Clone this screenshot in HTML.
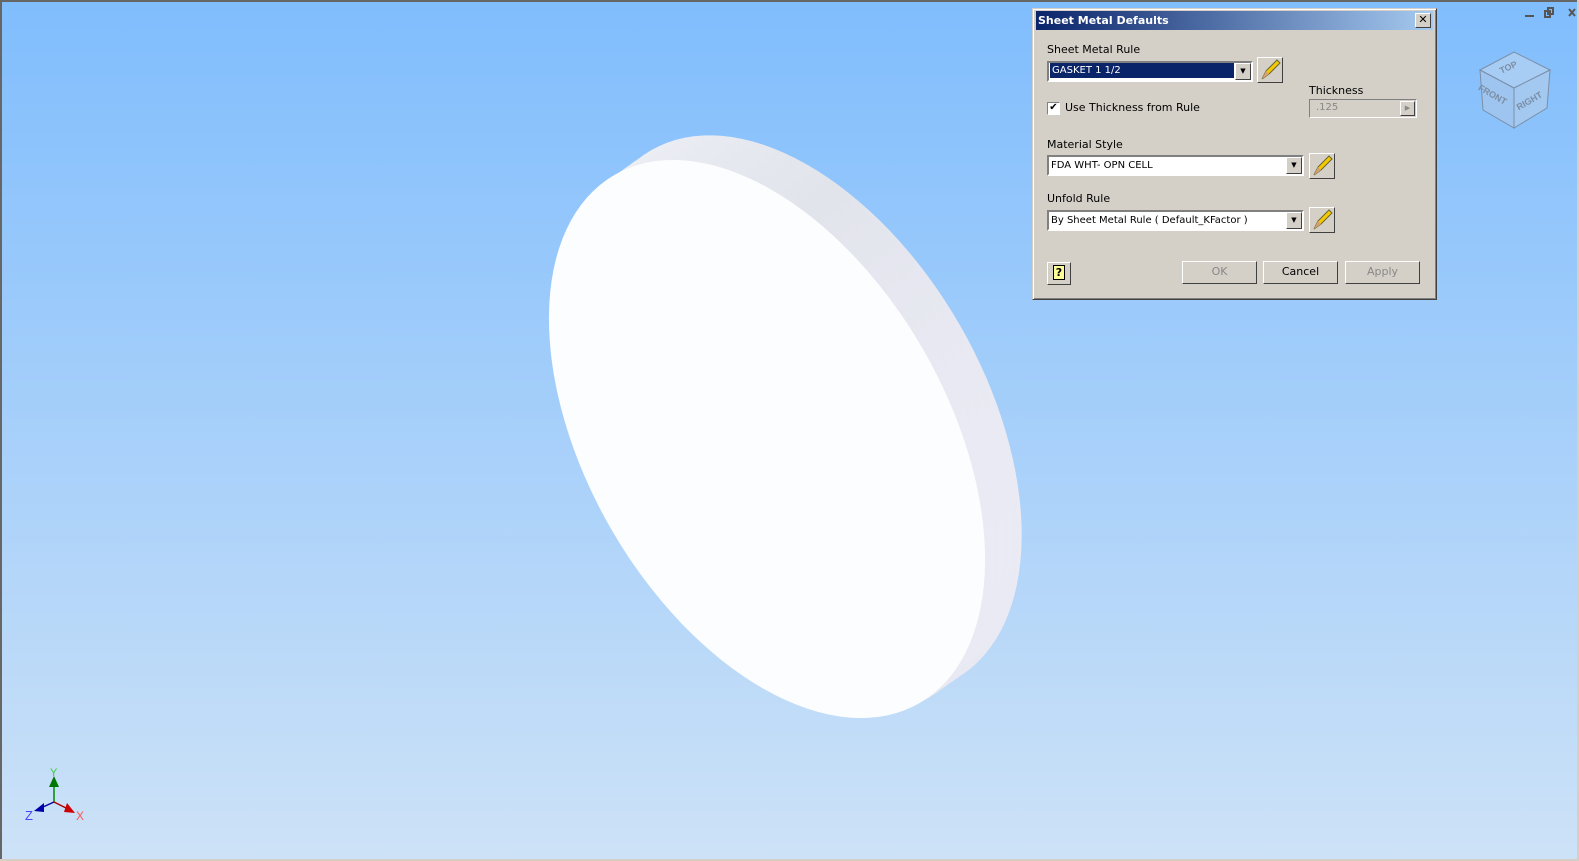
<!DOCTYPE html>
<html><head><style>
*{margin:0;padding:0;box-sizing:border-box}
body{width:1579px;height:861px;overflow:hidden;background:#d4d0c8;font-family:"DejaVu Sans","Liberation Sans",sans-serif;font-size:11px;position:relative}
#vp{position:absolute;left:0;top:0;width:1577px;height:859px;background:linear-gradient(#80bdfd,#cde2f7);border-left:2px solid #666;border-top:2px solid #666}
.dlg{position:absolute;left:1032px;top:8px;width:405px;height:292px;background:#d4d0c8;border:1px solid;border-color:#d4d0c8 #404040 #404040 #d4d0c8;box-shadow:inset 1px 1px #fff,inset -1px -1px #808080}
.tb{position:absolute;left:3px;top:2px;right:3px;height:19px;background:linear-gradient(90deg,#0a246a,#a6caf0);color:#fff;font-weight:bold;font-size:11px;line-height:19px;padding-left:2px}
.x{position:absolute;right:2px;top:2px;width:16px;height:15px;background:#d4d0c8;border:1px solid;border-color:#fff #404040 #404040 #fff;color:#000;font-size:11px;line-height:12px;text-align:center}
.l{position:absolute;font-size:11px;color:#000;line-height:13px}
.cb{position:absolute;height:21px;background:#fff;border:2px solid;border-color:#808080 #fff #fff #808080;line-height:16px;padding-left:2px;font-size:11px}
.dd{position:absolute;right:0;top:0;width:16px;height:17px;background:#d4d0c8;border:1px solid;border-color:#fff #404040 #404040 #fff;font-size:7px;text-align:center;line-height:15px}
.pb{position:absolute;width:26px;height:26px;border:1px solid;border-color:#fff #404040 #404040 #fff;background:#d4d0c8}
.btn{position:absolute;top:252px;width:75px;height:23px;border:1px solid;border-color:#fff #404040 #404040 #fff;text-align:center;line-height:20px;font-size:11px}
</style></head><body>
<div id="vp"></div>
<svg style="position:absolute;left:0;top:0" width="1579" height="861">
<defs><linearGradient id="sg" x1="0" y1="0" x2="1" y2="1"><stop offset="0" stop-color="#f4f6fb"/><stop offset="0.55" stop-color="#e2e4ec"/><stop offset="1" stop-color="#eeeef8"/></linearGradient></defs>
<g transform="translate(767,439) rotate(-30)">
<ellipse rx="180" ry="305" fill="url(#sg)" transform="translate(44,-3)"/>
<ellipse rx="180" ry="305" fill="url(#sg)" transform="translate(33,-2)"/>
<ellipse rx="180" ry="305" fill="url(#sg)" transform="translate(22,-1)"/>
<ellipse rx="180" ry="305" fill="url(#sg)" transform="translate(11,0)"/>
<ellipse rx="180" ry="305" fill="#fcfdff"/>
</g>
<g font-family="Liberation Sans" font-size="11">
<line x1="54" y1="802" x2="54" y2="783" stroke="#080" stroke-width="1.5"/>
<polygon points="49,787 54,776 59,787" fill="#070"/>
<text x="50" y="776" fill="#3c3">Y</text>
<polyline points="54,802 43,807" stroke="#00a" fill="none" stroke-width="1.5"/>
<polygon points="34,811 44,803 44,812" fill="#00a"/>
<text x="25" y="820" fill="#44f" font-size="13">Z</text>
<polyline points="54,802 66,808" stroke="#a00" fill="none" stroke-width="1.5"/>
<polygon points="75,813 64,812 67,803" fill="#c00"/>
<text x="76" y="820" fill="#f55" font-size="12">X</text>
</g>
<g fill="#a8cdf4" stroke="#7a8ea8" stroke-width="1">
<polygon points="1480,70 1514,52 1550,70 1514,88"/>
<polygon points="1480,70 1514,88 1514,128 1483,110" fill="#9ec5ef"/>
<polygon points="1514,88 1550,70 1547,108 1514,128" fill="#a3c9f1"/>
</g>
<g font-family="Liberation Sans" font-size="9" fill="#7b8ea6" font-weight="bold">
<text x="1500" y="72" transform="rotate(-25 1505 70)">TOP</text>
<text x="1474" y="95" transform="rotate(30 1486 99)">FRONT</text>
<text x="1514" y="107" transform="rotate(-30 1523 100)">RIGHT</text>
</g>
<g stroke="#555" fill="none" stroke-width="2">
<line x1="1525" y1="16" x2="1534" y2="16"/>
<rect x="1545" y="11" width="5" height="6"/><rect x="1548" y="8" width="5" height="6"/>
<path d="M1569 9 L1575 16 M1575 9 L1569 16"/>
</g>
</svg>
<div class="dlg">
<div class="tb">Sheet Metal Defaults<div class="x">✕</div></div>
<div class="l" style="left:14px;top:34px">Sheet Metal Rule</div>
<div class="cb" style="left:14px;top:52px;width:206px;padding-left:1px"><div style="background:#0a246a;color:#fff;width:184px;height:15px;line-height:15px;padding-left:2px;font-size:10px">GASKET 1 1/2</div><div class="dd">▼</div></div>
<div class="pb" style="left:224px;top:48px"><svg width="24" height="24"><path d="M4 21 L8 13 L19 2 L22 5 L11 16 Z" fill="#f5c800" stroke="#663" stroke-width="1"/><path d="M4 21 L8 13 L11 16 Z" fill="#d9a070"/></svg></div>
<div class="l" style="left:276px;top:75px">Thickness</div>
<div style="position:absolute;left:276px;top:90px;width:108px;height:19px;border:1px solid;border-color:#808080 #fff #fff #808080;color:#888;font-size:10px;line-height:16px;padding-left:6px">.125<div style="position:absolute;right:1px;top:1px;width:15px;height:15px;border:1px solid;border-color:#fff #404040 #404040 #fff;font-size:7px;text-align:center;line-height:13px;color:#888">▶</div></div>
<div style="position:absolute;left:14px;top:93px;width:13px;height:13px;background:#fff;border:1px solid;border-color:#808080 #fff #fff #808080;font-size:10px;line-height:10px;text-align:center">✔</div>
<div class="l" style="left:32px;top:92px">Use Thickness from Rule</div>
<div class="l" style="left:14px;top:129px">Material Style</div>
<div class="cb" style="left:14px;top:146px;width:257px"><span style="font-size:10px">FDA WHT- OPN CELL</span><div class="dd">▼</div></div>
<div class="pb" style="left:276px;top:144px"><svg width="24" height="24"><path d="M4 21 L8 13 L19 2 L22 5 L11 16 Z" fill="#f5c800" stroke="#663"/><path d="M4 21 L8 13 L11 16 Z" fill="#d9a070"/></svg></div>
<div class="l" style="left:14px;top:183px">Unfold Rule</div>
<div class="cb" style="left:14px;top:201px;width:257px"><span style="font-size:10px">By Sheet Metal Rule ( Default_KFactor )</span><div class="dd">▼</div></div>
<div class="pb" style="left:276px;top:198px"><svg width="24" height="24"><path d="M4 21 L8 13 L19 2 L22 5 L11 16 Z" fill="#f5c800" stroke="#663"/><path d="M4 21 L8 13 L11 16 Z" fill="#d9a070"/></svg></div>
<div class="pb" style="left:14px;top:253px;width:24px;height:23px;font-weight:bold;text-align:center;line-height:19px;font-size:11px"><span style="border:1px solid #000;background:#ff9;padding:0 2px">?</span></div>
<div class="btn" style="left:149px;color:#888">OK</div>
<div class="btn" style="left:230px">Cancel</div>
<div class="btn" style="left:312px;color:#888">Apply</div>
</div>
</body></html>
